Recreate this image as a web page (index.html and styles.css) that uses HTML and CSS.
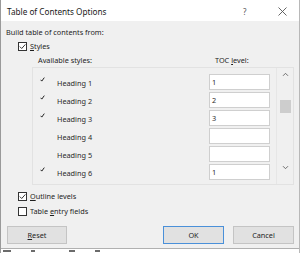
FILE: index.html
```html
<!DOCTYPE html>
<html lang="en">
<head>
    <meta charset="UTF-8">
    <title>Table of Contents Options</title>
    <link rel="stylesheet" href="styles.css">
</head>
<body>
    <div class="dialog">
        <div class="titlebar">
            <span class="title">Table of Contents Options</span>
            <span class="help">?</span>
            <span class="close">
                <svg width="9" height="9" viewBox="0 0 9 9"><path d="M0.5 0.5L8.5 8.5M8.5 0.5L0.5 8.5" stroke="#555" stroke-width="0.9" fill="none"/></svg>
            </span>
        </div>
        <div class="content">
            <div class="line">Build table of contents from:</div>
            <label class="check-row first">
                <span class="box checked"><svg width="9" height="9" viewBox="0 0 9 9"><path d="M1.8 4.6L3.7 6.5L7.4 2.4" stroke="#222" stroke-width="0.9" fill="none"/></svg></span>
                <span><u>S</u>tyles</span>
            </label>
            <div class="head-row">
                <span class="avail">Available styles:</span>
                <span class="toc">TOC <u>l</u>evel:</span>
            </div>
            <div class="listbox">
                <div class="rows">
                    <div class="row"><span class="tick"><svg width="5" height="5" viewBox="0 0 5 5"><path d="M0.6 2.8L1.8 4.1L4.3 0.6" stroke="#222" stroke-width="1" fill="none"/></svg></span><span class="name">Heading 1</span><span class="level">1</span></div>
                    <div class="row"><span class="tick"><svg width="5" height="5" viewBox="0 0 5 5"><path d="M0.6 2.8L1.8 4.1L4.3 0.6" stroke="#222" stroke-width="1" fill="none"/></svg></span><span class="name">Heading 2</span><span class="level">2</span></div>
                    <div class="row"><span class="tick"><svg width="5" height="5" viewBox="0 0 5 5"><path d="M0.6 2.8L1.8 4.1L4.3 0.6" stroke="#222" stroke-width="1" fill="none"/></svg></span><span class="name">Heading 3</span><span class="level">3</span></div>
                    <div class="row"><span class="tick"></span><span class="name">Heading 4</span><span class="level"></span></div>
                    <div class="row"><span class="tick"></span><span class="name">Heading 5</span><span class="level"></span></div>
                    <div class="row"><span class="tick"><svg width="5" height="5" viewBox="0 0 5 5"><path d="M0.6 2.8L1.8 4.1L4.3 0.6" stroke="#222" stroke-width="1" fill="none"/></svg></span><span class="name">Heading 6</span><span class="level">1</span></div>
                </div>
                <div class="scrollbar">
                    <svg width="7" height="5" viewBox="0 0 7 5"><path d="M1 3.8L3.5 1.3L6 3.8" stroke="#606060" stroke-width="0.9" fill="none"/></svg>
                    <div class="thumb"></div>
                    <svg width="7" height="5" viewBox="0 0 7 5"><path d="M1 1.2L3.5 3.7L6 1.2" stroke="#606060" stroke-width="0.9" fill="none"/></svg>
                </div>
            </div>
            <label class="check-row outline">
                <span class="box checked"><svg width="9" height="9" viewBox="0 0 9 9"><path d="M1.8 4.6L3.7 6.5L7.4 2.4" stroke="#222" stroke-width="0.9" fill="none"/></svg></span>
                <span><u>O</u>utline levels</span>
            </label>
            <label class="check-row entry">
                <span class="box"></span>
                <span>Table <u>e</u>ntry fields</span>
            </label>
            <div class="buttons">
                <button class="btn"><u>R</u>eset</button>
                <button class="btn ok">OK</button>
                <button class="btn">Cancel</button>
            </div>
        </div>
        <div class="under"><i></i><i class="b"></i><i class="c"></i><i class="d"></i></div>
    </div>
</body>
</html>
```

FILE: styles.css
```css
body {
    margin: 0;
    font-family: "Noto Sans", "Open Sans", sans-serif;
    font-size: 7.3px;
    color: #1e1e1e;
    background: #ffffff;
}
.dialog {
    width: 300px;
    height: 253px;
    box-sizing: border-box;
    border-left: 1px solid #9a9a9a;
    border-right: 1px solid #b8b8b8;
    display: flex;
    flex-direction: column;
}
.titlebar {
    height: 22px;
    background: #ffffff;
    display: flex;
    align-items: center;
    padding-left: 6px;
}
.title {
    font-size: 8.2px;
    color: #1a1a1a;
    flex: 1;
    padding-top: 2px;
}
.help {
    font-size: 8px;
    color: #555;
    width: 10px;
    margin-right: 25px;
    padding-top: 2px;
}
.close {
    width: 9px;
    margin-right: 12px;
    display: flex;
    padding-top: 2px;
}
.content {
    background: #f0f0f0;
    flex: 1;
    padding: 5px 5px 4px 5px;
    display: flex;
    flex-direction: column;
}
.line {
    height: 12px;
    line-height: 12px;
}
.check-row {
    display: flex;
    align-items: center;
    height: 12px;
    padding-left: 12px;
}
.check-row.first {
    margin-top: 2px;
}
.check-row.outline {
    margin-top: 5px;
}
.check-row.entry {
    margin-top: 3px;
}
.box {
    width: 9px;
    height: 9px;
    box-sizing: border-box;
    border: 1px solid #333;
    background: #fff;
    margin-right: 3px;
    display: flex;
    align-items: center;
    justify-content: center;
}
.box svg {
    flex: none;
}
.head-row {
    height: 12px;
    line-height: 12px;
    margin-top: 2px;
    display: flex;
}
.avail {
    margin-left: 32px;
    width: 177px;
}
.listbox {
    margin-top: 1px;
    margin-left: 26px;
    height: 118px;
    box-sizing: border-box;
    border: 1px solid #e2e2e2;
    display: flex;
}
.rows {
    flex: 1;
    padding-top: 6px;
    display: flex;
    flex-direction: column;
    gap: 2px;
}
.row {
    height: 16px;
    display: flex;
    align-items: center;
    color: #2a2a2a;
}
.tick {
    width: 24px;
    height: 16px;
    padding-left: 7px;
    padding-top: 3px;
    box-sizing: border-box;
    display: flex;
    align-items: flex-start;
}
.name {
    flex: 1;
    padding-top: 1px;
}
.level {
    width: 61px;
    height: 16px;
    box-sizing: border-box;
    border: 1px solid #cfcfcf;
    background: #fff;
    margin-right: 6px;
    padding-left: 2px;
    line-height: 14px;
}
.scrollbar {
    width: 16px;
    border-left: 1px solid #e6e6e6;
    display: flex;
    flex-direction: column;
    align-items: center;
    padding-top: 4px;
}
.thumb {
    width: 11px;
    height: 13px;
    background: #cdcdcd;
    margin-top: 23px;
    margin-bottom: 52px;
}
.buttons {
    margin-top: 9px;
    display: flex;
    gap: 9px;
    padding-left: 1px;
}
.btn {
    height: 18px;
    width: 61px;
    font-family: inherit;
    font-size: 7.3px;
    color: #1e1e1e;
    background: #e1e1e1;
    border: 1px solid #c4c4c4;
    padding: 0;
}
.btn:first-child {
    width: 60px;
}
.btn.ok {
    margin-left: auto;
    border-color: #4a90d9;
}
.under {
    height: 4px;
    background: #fff;
    border-top: 1px solid #b0b0b0;
    display: flex;
    gap: 20px;
    padding-left: 2px;
}
.under i {
    width: 8px;
    height: 2px;
    background: #6b6b6b;
    margin-top: 1px;
}
.under .b { width: 4px; }
.under .c { width: 6px; margin-left: 14px; }
.under .d { width: 5px; }
```
